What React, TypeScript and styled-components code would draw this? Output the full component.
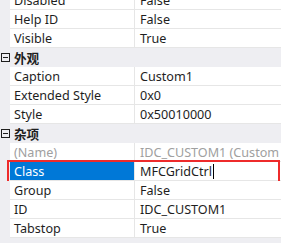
import styled, { createGlobalStyle } from 'styled-components';

const GlobalStyle = createGlobalStyle`
    html, body {
        margin: 0;
        padding: 0;
        background: #ffffff;
    }
    body {
        font-family: "Noto Sans", "Noto Sans CJK SC", sans-serif;
        font-size: 12.6px;
        color: #000000;
    }
`;

const Viewport = styled.div`
    width: 281px;
    height: 243px;
    overflow: hidden;
    background: #eeeef2;
`;

const Grid = styled.div`
    margin-top: -9px;
    display: flex;
    flex-direction: column;
`;

const Row = styled.div`
    position: relative;
    display: grid;
    grid-template-columns: 10px 125px 1fr;
    height: 19px;
`;

const Gutter = styled.div`
    background: #eeeef2;
`;

const NameCell = styled.div<{ $selected?: boolean; $muted?: boolean }>`
    display: flex;
    align-items: center;
    padding-left: 4px;
    border-bottom: 1px solid #e6e6e6;
    border-right: 1px solid #e6e6e6;
    background: ${p => (p.$selected ? '#0078d7' : '#ffffff')};
    color: ${p => (p.$selected ? '#ffffff' : p.$muted ? '#a0a0a0' : '#1e1e1e')};
    white-space: nowrap;
    overflow: hidden;
`;

const ValueCell = styled.div<{ $muted?: boolean }>`
    display: flex;
    align-items: center;
    padding-left: 5px;
    border-bottom: 1px solid #e6e6e6;
    background: #ffffff;
    color: ${p => (p.$muted ? '#a0a0a0' : '#1e1e1e')};
    white-space: nowrap;
    overflow: hidden;
`;

const Caret = styled.span`
    display: inline-block;
    width: 1px;
    height: 15px;
    margin-left: 1px;
    background: #000000;
`;

const CategoryRow = styled.div`
    display: flex;
    align-items: center;
    height: 19px;
    background: #eeeef2;
    font-weight: bold;
    color: #1e1e1e;
`;

const Toggle = styled.span`
    width: 10px;
    display: flex;
    justify-content: center;
    margin-right: 4px;
`;

const Highlight = styled.div`
    position: absolute;
    left: 7px;
    right: 1px;
    top: -2px;
    bottom: -2px;
    border: 2px solid #ee2b2b;
    pointer-events: none;
`;

type Prop = { name: string; value: string; muted?: boolean; selected?: boolean };

const rows: (Prop | { category: string })[] = [
    { name: 'Disabled', value: 'False' },
    { name: 'Help ID', value: 'False' },
    { name: 'Visible', value: 'True' },
    { category: '外观' },
    { name: 'Caption', value: 'Custom1' },
    { name: 'Extended Style', value: '0x0' },
    { name: 'Style', value: '0x50010000' },
    { category: '杂项' },
    { name: '(Name)', value: 'IDC_CUSTOM1 (Custom Control)', muted: true },
    { name: 'Class', value: 'MFCGridCtrl', selected: true },
    { name: 'Group', value: 'False' },
    { name: 'ID', value: 'IDC_CUSTOM1' },
    { name: 'Tabstop', value: 'True' },
];

function MinusBox() {
    return (
        <svg width="9" height="9" viewBox="0 0 9 9">
            <rect x="0.5" y="0.5" width="8" height="8" fill="none" stroke="#1e1e1e" />
            <line x1="2" y1="4.5" x2="7" y2="4.5" stroke="#1e1e1e" />
        </svg>
    );
}

export default function App() {
    return (
        <Viewport>
            <GlobalStyle />
            <Grid>
                {rows.map((r, i) => {
                    if ('category' in r) {
                        return (
                            <CategoryRow key={i}>
                                <Toggle><MinusBox /></Toggle>
                                {r.category}
                            </CategoryRow>
                        );
                    }
                    return (
                        <Row key={i}>
                            <Gutter />
                            <NameCell $selected={r.selected} $muted={r.muted}>{r.name}</NameCell>
                            <ValueCell $muted={r.muted}>
                                {r.value}
                                {r.selected && <Caret />}
                            </ValueCell>
                            {r.selected && <Highlight />}
                        </Row>
                    );
                })}
            </Grid>
        </Viewport>
    );
}
